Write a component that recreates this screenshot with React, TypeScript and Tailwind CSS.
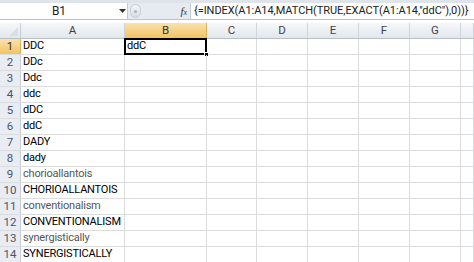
import React from "react";

const cols = [
  { l: "A", w: "w-[104px]" },
  { l: "B", w: "w-[82px]" },
  { l: "C", w: "w-[50px]" },
  { l: "D", w: "w-[51px]" },
  { l: "E", w: "w-[51px]" },
  { l: "F", w: "w-[51px]" },
  { l: "G", w: "w-[51px]" },
  { l: "", w: "flex-1" },
];

const data: { t: string; light?: boolean }[] = [
  { t: "DDC" },
  { t: "DDc" },
  { t: "Ddc" },
  { t: "ddc" },
  { t: "dDC" },
  { t: "ddC" },
  { t: "DADY" },
  { t: "dady" },
  { t: "chorioallantois", light: true },
  { t: "CHORIOALLANTOIS" },
  { t: "conventionalism", light: true },
  { t: "CONVENTIONALISM" },
  { t: "synergistically", light: true },
  { t: "SYNERGISTICALLY" },
];

export default function App() {
  return (
    <div
      className="w-[474px] h-[262px] overflow-hidden bg-white relative"
      style={{ fontFamily: "Roboto, 'Liberation Sans', sans-serif" }}
    >
      <div className="h-[3px] bg-[#dfe4ea]" />
      {/* formula bar */}
      <div className="flex h-[17px] bg-[#e6ebf1] border-b border-[#b9c3cf]">
        <div className="w-[118px] bg-white flex items-center justify-center text-[12px] text-[#222]">
          B1
        </div>
        <div className="w-[9px] bg-white flex items-center justify-center">
          <svg width="7" height="4" viewBox="0 0 7 4">
            <path d="M0 0 H7 L3.5 4 Z" fill="#333" />
          </svg>
        </div>
        <div className="w-[63px] flex items-center justify-between pl-[2px] pr-[3px] border-l border-[#c3ccd6]">
          <div className="w-[11px] h-[14px] rounded-full bg-gradient-to-b from-[#f4f6f8] to-[#d8dde3] border border-[#c5ccd4] flex items-center justify-center">
            <div className="w-[3px] h-[3px] rounded-full bg-[#aab3bd]" />
          </div>
          <span
            className="text-[11px] italic text-[#333] leading-none"
            style={{ fontFamily: "'Liberation Serif', serif" }}
          >
            f<span className="text-[8px]">x</span>
          </span>
        </div>
        <div className="flex-1 bg-white flex items-center pl-[3px] text-[11px] text-[#222] whitespace-nowrap overflow-hidden border-l border-[#c3ccd6] tracking-[-0.05px]">
          {'{=INDEX(A1:A14,MATCH(TRUE,EXACT(A1:A14,"ddC"),0))}'}
        </div>
      </div>
      <div className="h-[3px] bg-white" />
      {/* header row */}
      <div className="flex h-[16px] border-b border-[#b8c0c9]">
        <div className="w-[21px] bg-gradient-to-b from-[#f6f7f9] to-[#e3e7ec] border-r border-[#c8ced6] relative">
          <svg className="absolute right-[2px] bottom-[2px]" width="9" height="9" viewBox="0 0 9 9">
            <path d="M9 0 V9 H0 Z" fill="#dadfe5" />
          </svg>
        </div>
        {cols.map((c, i) => (
          <div
            key={i}
            className={`${c.w} flex items-center justify-center text-[11.5px] border-r ${
              c.l === "B"
                ? "bg-gradient-to-b from-[#fae2ae] to-[#f2c360] text-[#333] border-[#e0b05a]"
                : "bg-gradient-to-b from-[#f6f7f9] to-[#e3e7ec] text-[#444] border-[#d0d5dc]"
            }`}
          >
            {c.l}
          </div>
        ))}
      </div>
      {/* rows */}
      {data.map((r, ri) => (
        <div key={ri} className="flex h-[16px] border-b border-[#dadcdd]">
          <div
            className={`w-[21px] flex items-center justify-center text-[11.5px] border-r ${
              ri === 0
                ? "bg-gradient-to-b from-[#fae2ae] to-[#f2c360] text-[#333] border-[#e0b05a]"
                : "bg-[#e9edf3] text-[#4a5568] border-[#c8ced6]"
            }`}
          >
            {ri + 1}
          </div>
          {cols.map((c, ci) => (
            <div
              key={ci}
              className={`${c.w} relative flex items-center pl-[2px] text-[11px] tracking-[-0.2px] whitespace-nowrap border-r border-[#dadcdd] ${
                r.light && ci === 0 ? "text-[#555]" : "text-black"
              }`}
            >
              {ci === 0 ? r.t : ri === 0 && ci === 1 ? "ddC" : ""}
              {ri === 0 && ci === 1 && (
                <div className="absolute left-[-1px] top-[-1px] right-[-1px] bottom-[-1px] border-2 border-black">
                  <div className="absolute right-[-4px] bottom-[-4px] w-[5px] h-[5px] bg-black border border-white" />
                </div>
              )}
            </div>
          ))}
        </div>
      ))}
    </div>
  );
}
